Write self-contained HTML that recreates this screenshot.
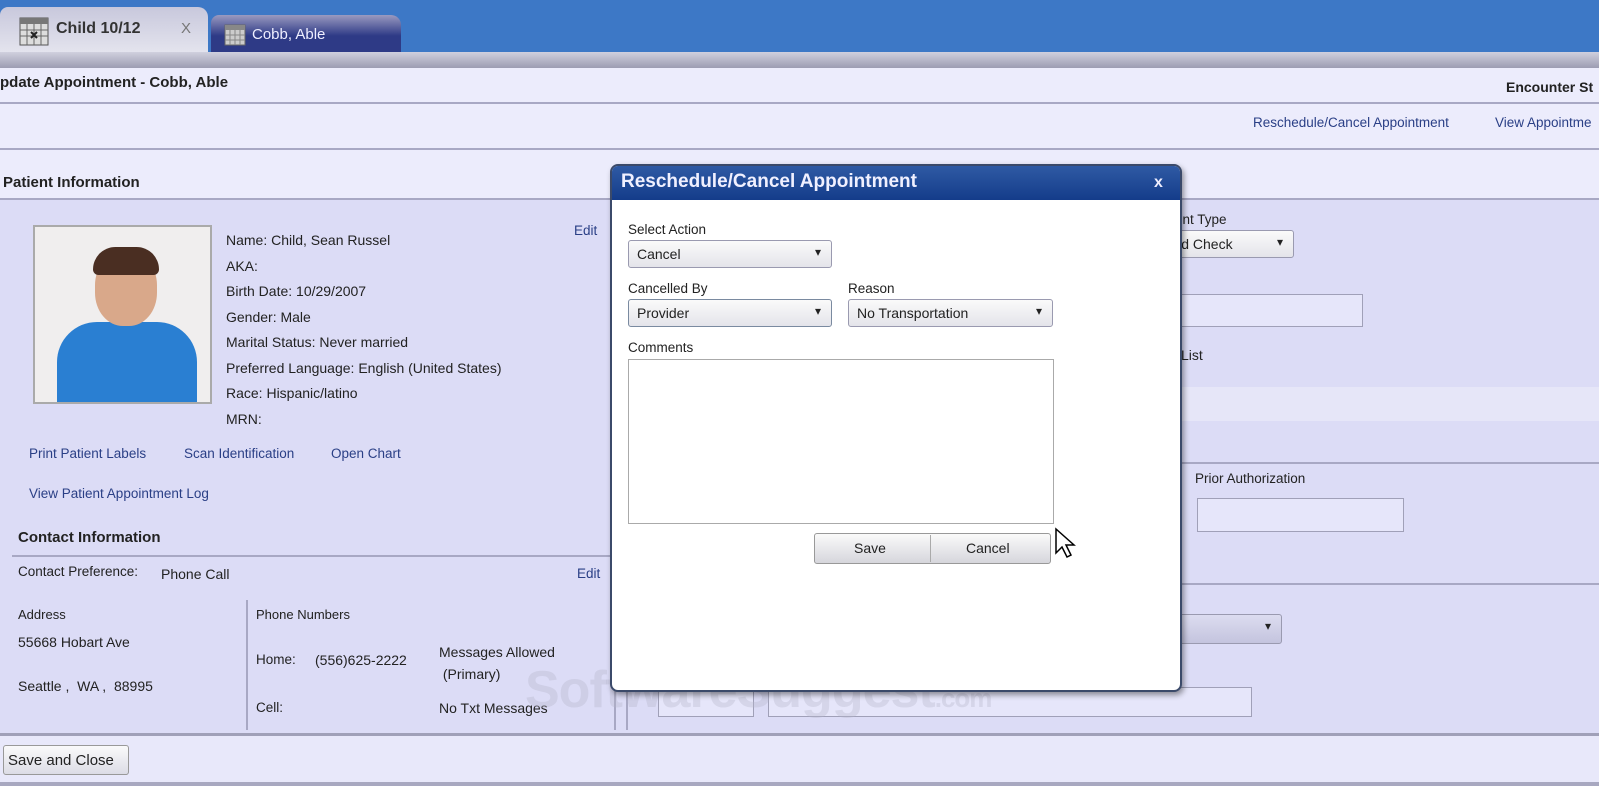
<!DOCTYPE html>
<html><head><meta charset="utf-8"><style>
*{margin:0;padding:0;box-sizing:border-box}
body{width:1599px;height:786px;overflow:hidden;background:#dcdcf6;font-family:"Liberation Sans",sans-serif;font-size:14px;color:#222;position:relative}
.a{position:absolute;white-space:nowrap}
.b{font-weight:bold}
.lnk{color:#2a3f86;font-size:13.5px}
.hr{position:absolute;height:2px;background:#a8a8c4}
.sel{position:absolute;border:1px solid #9a9ab0;border-radius:3px;background:linear-gradient(#fafafa,#e4e4ea);font-size:14px;padding:5px 8px}
.sel:after{content:"▾";position:absolute;right:10px;top:4px;font-size:12px}
.inp{position:absolute;border:1px solid #a0a0b8;background:#e6e6fa}
</style></head><body>
<div class="a" style="left:0;top:0;width:1599px;height:52px;background:#3d78c6"></div>
<div class="a" style="left:0;top:7px;width:208px;height:46px;background:linear-gradient(#c8c8dc,#e4e4ee);border-radius:8px 10px 0 0"></div>
<div class="a" style="left:211px;top:15px;width:190px;height:38px;background:linear-gradient(#9a9ac0,#2e3a86 55%);border-radius:8px 10px 0 0"></div>
<svg class="a" style="left:19px;top:14px" width="30" height="32"><rect x="1" y="4" width="28" height="27" fill="#ddd" stroke="#555"/><rect x="1" y="4" width="28" height="6" fill="#777"/><path d="M1 16h28M1 22h28M8 10v21M15 10v21M22 10v21" stroke="#666"/><path d="M12 18l6 6M18 18l-6 6" stroke="#222" stroke-width="2"/></svg>
<div class="a b" style="left:56px;top:20px;font-size:16px;color:#333">Child 10/12</div>
<div class="a" style="left:181px;top:20px;font-size:15px;color:#777">X</div>
<svg class="a" style="left:224px;top:22px" width="22" height="24"><rect x="1" y="3" width="20" height="20" fill="#ccc" stroke="#666"/><rect x="1" y="3" width="20" height="5" fill="#888"/><path d="M1 13h20M1 18h20M6 8v15M11 8v15M16 8v15" stroke="#888"/></svg>
<div class="a" style="left:252px;top:26px;font-size:15px;color:#eef">Cobb, Able</div>
<div class="a" style="left:0;top:52px;width:1599px;height:16px;background:linear-gradient(#d0d0de,#9c9cb2)"></div>
<div class="a" style="left:0;top:68px;width:1599px;height:130px;background:#ececfc"></div>
<div class="a b" style="left:0;top:74px;font-size:15px">pdate Appointment - Cobb, Able</div>
<div class="a b" style="left:1506px;top:79px;font-size:14px">Encounter St</div>
<div class="hr" style="left:0;top:102px;width:1599px"></div>
<div class="a lnk" style="left:1253px;top:115px">Reschedule/Cancel Appointment</div>
<div class="a lnk" style="left:1495px;top:115px">View Appointme</div>
<div class="hr" style="left:0;top:148px;width:1599px"></div>
<div class="a b" style="left:3px;top:174px;font-size:15px">Patient Information</div>
<div class="hr" style="left:0;top:198px;width:1599px"></div>
<div class="a" style="left:33px;top:225px;width:179px;height:179px;border:2px solid #aaa;background:#f0eeee;overflow:hidden">
<div class="a" style="left:22px;top:95px;width:140px;height:100px;background:#2a7fd2;border-radius:40px 40px 0 0"></div>
<div class="a" style="left:60px;top:25px;width:62px;height:74px;background:#d9a88a;border-radius:45%"></div>
<div class="a" style="left:58px;top:20px;width:66px;height:28px;background:#4a2e22;border-radius:40px 40px 10px 10px"></div>
</div>
<div class="a" style="left:226px;top:228px;line-height:25.5px;font-size:14px">Name: Child, Sean Russel<br>AKA:<br>Birth Date: 10/29/2007<br>Gender: Male<br>Marital Status: Never married<br>Preferred Language: English (United States)<br>Race: Hispanic/latino<br>MRN:</div>
<div class="a lnk" style="left:574px;top:223px">Edit</div>
<div class="a lnk" style="left:29px;top:446px">Print Patient Labels</div>
<div class="a lnk" style="left:184px;top:446px">Scan Identification</div>
<div class="a lnk" style="left:331px;top:446px">Open Chart</div>
<div class="a lnk" style="left:29px;top:486px">View Patient Appointment Log</div>
<div class="a b" style="left:18px;top:529px;font-size:15px">Contact Information</div>
<div class="hr" style="left:12px;top:555px;width:598px"></div>
<div class="a" style="left:18px;top:564px;font-size:13.5px">Contact Preference:</div>
<div class="a" style="left:161px;top:566px">Phone Call</div>
<div class="a lnk" style="left:577px;top:566px">Edit</div>
<div class="a" style="left:18px;top:607px;font-size:13px">Address</div>
<div class="a" style="left:18px;top:634px">55668 Hobart Ave</div>
<div class="a" style="left:18px;top:678px">Seattle ,&nbsp; WA ,&nbsp; 88995</div>
<div class="a" style="left:246px;top:600px;width:2px;height:130px;background:#a8a8c4"></div>
<div class="a" style="left:256px;top:607px;font-size:13px">Phone Numbers</div>
<div class="a" style="left:256px;top:652px;font-size:13.5px">Home:</div>
<div class="a" style="left:315px;top:652px">(556)625-2222</div>
<div class="a" style="left:439px;top:641px;line-height:22px">Messages Allowed<br>&nbsp;(Primary)</div>
<div class="a" style="left:256px;top:700px;font-size:13.5px">Cell:</div>
<div class="a" style="left:439px;top:700px">No Txt Messages</div>
<div class="a" style="left:614px;top:600px;width:2px;height:130px;background:#a8a8c4"></div>
<div class="a" style="left:626px;top:600px;width:2px;height:130px;background:#a8a8c4"></div>
<div class="a" style="left:1175px;top:212px;font-size:13.5px">ent Type</div>
<div class="sel" style="left:1160px;top:230px;width:134px;height:28px;padding-left:14px">ild Check</div>
<div class="inp" style="left:1160px;top:294px;width:203px;height:33px"></div>
<div class="a" style="left:1181px;top:347px;font-size:14px">List</div>
<div class="a" style="left:1160px;top:387px;width:439px;height:34px;background:#e6e6f8"></div>
<div class="hr" style="left:1160px;top:462px;width:439px"></div>
<div class="a" style="left:1195px;top:471px;font-size:13.5px">Prior Authorization</div>
<div class="inp" style="left:1197px;top:498px;width:207px;height:34px"></div>
<div class="hr" style="left:1160px;top:583px;width:439px"></div>
<div class="sel" style="left:1160px;top:614px;width:122px;height:30px;background:linear-gradient(#dcdcf0,#c4c4de)"></div>
<div class="inp" style="left:658px;top:687px;width:96px;height:30px"></div>
<div class="inp" style="left:768px;top:687px;width:484px;height:30px"></div>
<div class="a" style="left:0;top:733px;width:1599px;height:3px;background:#a0a0b8"></div>
<div class="a" style="left:0;top:736px;width:1599px;height:46px;background:#e8e8fa"></div>
<div class="a" style="left:3px;top:745px;width:126px;height:30px;border:1px solid #999;border-radius:3px;background:linear-gradient(#fafafa,#dcdce6);font-size:15px;padding:6px 4px">Save and Close</div>
<div class="a" style="left:0;top:782px;width:1599px;height:4px;background:#a8a8c0"></div>
<div class="a b" style="left:525px;top:660px;font-size:52px;color:rgba(180,180,200,0.35);letter-spacing:-1px">SoftwareSuggest<span style="font-size:26px">.com</span></div>
<div class="a" style="left:610px;top:164px;width:572px;height:528px;background:#fff;border:2px solid #3b4a6a;border-radius:8px;box-shadow:2px 3px 6px rgba(0,0,0,.4);overflow:hidden">
<div class="a" style="left:0;top:0;width:570px;height:34px;background:linear-gradient(#2f5aa4,#143c8a)"></div>
<div class="a b" style="left:9px;top:5px;font-size:19px;color:#f0f0ff">Reschedule/Cancel Appointment</div>
<div class="a b" style="left:542px;top:8px;font-size:16px;color:#eef">x</div>
<div class="a" style="left:16px;top:56px;font-size:13.5px">Select Action</div>
<div class="sel" style="left:16px;top:74px;width:204px;height:28px">Cancel</div>
<div class="a" style="left:16px;top:115px;font-size:13.5px">Cancelled By</div>
<div class="sel" style="left:16px;top:133px;width:204px;height:28px;border-color:#7a8aa0">Provider</div>
<div class="a" style="left:236px;top:115px;font-size:13.5px">Reason</div>
<div class="sel" style="left:236px;top:133px;width:205px;height:28px">No Transportation</div>
<div class="a" style="left:16px;top:174px;font-size:13.5px">Comments</div>
<div class="a" style="left:16px;top:193px;width:426px;height:165px;border:1px solid #aaa"></div>
<div class="a" style="left:202px;top:367px;width:237px;height:31px;border:1px solid #999;border-radius:3px;background:linear-gradient(#fafafa,#d6d6dc)"></div>
<div class="a" style="left:318px;top:369px;width:1px;height:27px;background:#aaa"></div>
<div class="a" style="left:242px;top:374px;font-size:14px">Save</div>
<div class="a" style="left:354px;top:374px;font-size:14px">Cancel</div>
</div>
<svg class="a" style="left:1054px;top:527px" width="22" height="32"><path d="M2 2v24l6-6 5 10 4-2-5-10h8z" fill="#fff" stroke="#000" stroke-width="1.5"/></svg>
</body></html>
